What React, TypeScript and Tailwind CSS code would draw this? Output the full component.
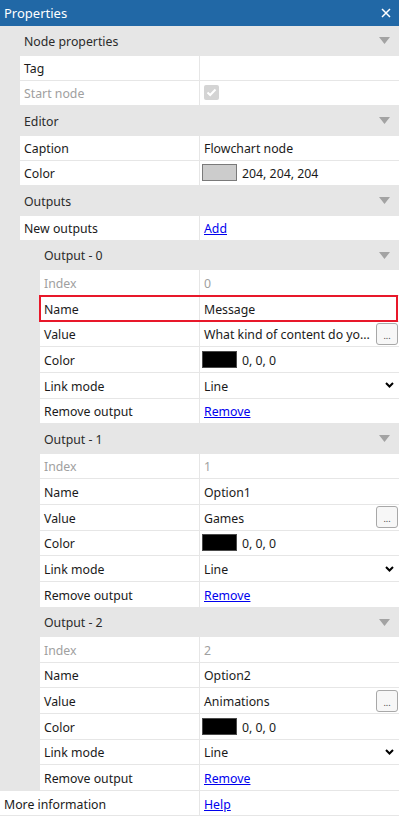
import React from "react";

const Tri = () => (
  <svg width="11" height="7" viewBox="0 0 11 7">
    <polygon points="0,0 11,0 5.5,7" fill="#a3a3a3" />
  </svg>
);

const Chevron = () => (
  <svg width="9" height="6" viewBox="0 0 9 6">
    <polyline points="1,1 4.5,4.5 8,1" fill="none" stroke="#000" strokeWidth="2" />
  </svg>
);

function Header({ title, nested }: { title: string; nested?: boolean }) {
  return (
    <div
      className={`flex h-[29.5px] items-center justify-between pr-[9px] ${
        nested ? "pl-[44px]" : "pl-[24px]"
      }`}
    >
      <span className="pt-[2px] text-[#2b2b2b]">{title}</span>
      <Tri />
    </div>
  );
}

type RowProps = {
  label: string;
  children?: React.ReactNode;
  level: 0 | 1 | 2;
  disabled?: boolean;
  valueClass?: string;
};

function Row({ label, children, level, disabled, valueClass }: RowProps) {
  const h = level === 2 ? "h-[25.67px]" : "h-[25.25px]";
  const lab =
    level === 2
      ? "ml-[40px] w-[159px]"
      : level === 1
      ? "ml-[20px] w-[179px]"
      : "w-[199px]";
  return (
    <div className={`flex ${h} pb-px`}>
      <div
        className={`${lab} flex items-center bg-white pl-[4px] ${
          disabled ? "text-[#a0a0a0]" : "text-[#1a1a1a]"
        }`}
      >
        <span className="pt-[3px]">{label}</span>
      </div>
      <div
        className={`ml-px flex min-w-0 flex-1 items-center bg-white ${
          valueClass ?? "pl-[4px]"
        }`}
      >
        {children}
      </div>
    </div>
  );
}

const Link = ({ t }: { t: string }) => (
  <span className="pt-[3px] text-[#0000ee] underline">{t}</span>
);

const Swatch = ({ color, text }: { color: string; text: string }) => (
  <div className="flex items-center">
    <div
      className={`h-[17px] w-[35px] border ${
        color === "#cccccc"
          ? "border-[#7a7a7a] bg-[#cccccc]"
          : "border-[#4a4a4a] bg-black"
      }`}
    />
    <span className="ml-[5px] pt-[3px] text-[#1a1a1a]">{text}</span>
  </div>
);

const Dots = () => (
  <div className="ml-auto mr-px flex h-[22px] w-[22px] shrink-0 items-end justify-center rounded-[3px] border border-[#a8a8a8] bg-[#f7f7f7] pb-[4px] text-[9px] leading-none text-[#444]">
    ...
  </div>
);

function Output({ n, name, value, highlight }: { n: number; name: string; value: string; highlight?: boolean }) {
  return (
    <>
      <Header title={`Output - ${n}`} nested />
      <Row label="Index" level={2} disabled>
        <span className="pt-[3px] text-[#a0a0a0]">{n}</span>
      </Row>
      <div className="relative">
        <Row label="Name" level={2}>
          <span className="pt-[3px] text-[#1a1a1a]">{name}</span>
        </Row>
        {highlight && (
          <div className="pointer-events-none absolute -top-px bottom-0 left-[39px] right-px border-2 border-[#e8182a]" />
        )}
      </div>
      <Row label="Value" level={2}>
        <span className="whitespace-nowrap pt-[3px] text-[#1a1a1a]">{value}</span>
        <Dots />
      </Row>
      <Row label="Color" level={2} valueClass="pl-[2px]">
        <Swatch color="#000000" text="0, 0, 0" />
      </Row>
      <Row label="Link mode" level={2} valueClass="pl-[4px] pr-[5px]">
        <span className="flex-1 pt-[3px] text-[#1a1a1a]">Line</span>
        <Chevron />
      </Row>
      <Row label="Remove output" level={2}>
        <Link t="Remove" />
      </Row>
    </>
  );
}

export default function App() {
  return (
    <div className="h-[819px] w-[399px] overflow-hidden bg-white font-['Noto_Sans',sans-serif] text-[12.3px] leading-none">
      <div className="flex h-[26px] items-center justify-between bg-[#2168a6] pl-[4px] pr-[8px] text-[13px] text-white">
        <span>Properties</span>
        <svg width="10" height="10" viewBox="0 0 10 10">
          <path d="M1 1 L9 9 M9 1 L1 9" stroke="#fff" strokeWidth="1.5" />
        </svg>
      </div>
      <div className="bg-[#e6e6e6]">
        <Header title="Node properties" />
        <Row label="Tag" level={1} />
        <Row label="Start node" level={1} disabled>
          <div className="flex h-[15px] w-[15px] items-center justify-center rounded-[2px] bg-[#d4d4d4]">
            <svg width="11" height="9" viewBox="0 0 11 9">
              <polyline points="1.5,4.5 4.2,7 9.5,1.5" fill="none" stroke="#fff" strokeWidth="2" />
            </svg>
          </div>
        </Row>
        <Header title="Editor" />
        <Row label="Caption" level={1}>
          <span className="pt-[3px] text-[#1a1a1a]">Flowchart node</span>
        </Row>
        <Row label="Color" level={1} valueClass="pl-[2px]">
          <Swatch color="#cccccc" text="204, 204, 204" />
        </Row>
        <Header title="Outputs" />
        <Row label="New outputs" level={1}>
          <Link t="Add" />
        </Row>
        <Output n={0} name="Message" value="What kind of content do yo..." highlight />
        <Output n={1} name="Option1" value="Games" />
        <Output n={2} name="Option2" value="Animations" />
        <Row label="More information" level={0}>
          <Link t="Help" />
        </Row>
      </div>
    </div>
  );
}
